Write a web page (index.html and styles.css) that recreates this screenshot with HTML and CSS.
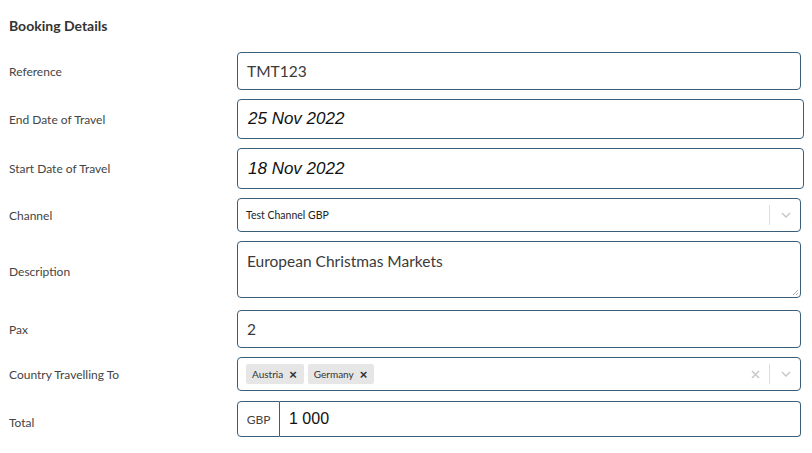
FILE: index.html
```html
<!DOCTYPE html>
<html>
<head>
<meta charset="utf-8">
<link rel="stylesheet" href="styles.css">
</head>
<body>
<div class="form">
  <h2 class="title">Booking Details</h2>
  <div class="row">
    <div class="label">Reference</div>
    <div class="control input h38">TMT123</div>
  </div>
  <div class="row">
    <div class="label">End Date of Travel</div>
    <div class="control input date h40">25 Nov 2022</div>
  </div>
  <div class="row">
    <div class="label">Start Date of Travel</div>
    <div class="control input date h41">18 Nov 2022</div>
  </div>
  <div class="row">
    <div class="label">Channel</div>
    <div class="control select h34">
      <div class="sel-value">Test Channel GBP</div>
      <div class="sel-ind">
        <span class="sep"></span>
        <svg class="chev" width="12" height="8" viewBox="0 0 12 8"><path d="M2 2 L6 6 L10 2" fill="none" stroke="#c4c4c4" stroke-width="1.3"/></svg>
      </div>
    </div>
  </div>
  <div class="row row-desc">
    <div class="label label-desc">Description</div>
    <div class="control textarea">European Christmas Markets
      <svg class="grip" width="7" height="7" viewBox="0 0 7 7"><path d="M6 1 L1 6 M6 4 L4 6" stroke="#999" stroke-width="0.8"/></svg>
    </div>
  </div>
  <div class="row">
    <div class="label">Pax</div>
    <div class="control input h38">2</div>
  </div>
  <div class="row row-country">
    <div class="label">Country Travelling To</div>
    <div class="control select h34">
      <div class="tags">
        <span class="tag">Austria <span class="x">×</span></span>
        <span class="tag">Germany <span class="x">×</span></span>
      </div>
      <div class="sel-ind">
        <svg class="clear" width="11" height="11" viewBox="0 0 11 11"><path d="M2 2 L9 9 M9 2 L2 9" stroke="#c8c8c8" stroke-width="1.5"/></svg>
        <span class="sep"></span>
        <svg class="chev" width="12" height="8" viewBox="0 0 12 8"><path d="M2 2 L6 6 L10 2" fill="none" stroke="#c4c4c4" stroke-width="1.3"/></svg>
      </div>
    </div>
  </div>
  <div class="row">
    <div class="label label-low">Total</div>
    <div class="control group">
      <div class="addon">GBP</div>
      <div class="amount">1 000</div>
    </div>
  </div>
</div>
</body>
</html>
```
FILE: styles.css
```css
* { box-sizing: border-box; }
body {
  margin: 0;
  background: #fff;
  font-family: Lato, "Liberation Sans", sans-serif;
  color: #333;
}
.form {
  width: 812px;
  padding: 17px 11px 0 9px;
}
.title {
  margin: 0 0 18px 0;
  font-size: 14px;
  font-weight: 700;
  color: #333;
  line-height: 17px;
}
.row {
  display: flex;
  align-items: center;
  margin-bottom: 9px;
}
.row-desc { margin-bottom: 12px; }
.row-country { margin-bottom: 10px; }
.label {
  width: 228px;
  flex: none;
  font-size: 12px;
  color: #444;
}
.label-low { padding-top: 7px; }
.label-desc { padding-top: 3px; }
.control {
  flex: 1;
  border: 1px solid #3b5f79;
  border-radius: 4px;
  background: #fff;
}
.input {
  display: flex;
  align-items: center;
  padding: 0 9px;
  font-size: 15.5px;
  color: #3a3a3a;
}
.h38 { height: 38px; }
.h40 { height: 40px; margin-right: -3px; }
.h41 { height: 41px; margin-right: -3px; }
.h34 { height: 34px; }
.date {
  font-family: "Liberation Sans", Arial, sans-serif;
  font-style: italic;
  font-size: 17px;
  color: #111;
  padding-left: 10px;
}
.select {
  display: flex;
  align-items: center;
  padding-left: 7px;
}
.sel-value {
  flex: 1;
  font-size: 10.5px;
  color: #222;
  padding-left: 1px;
}
.sel-ind {
  display: flex;
  align-items: center;
  margin-left: auto;
  padding-right: 8px;
}
.sep {
  width: 1px;
  height: 20px;
  background: #ddd;
  margin: 0 10px 0 8px;
}
.clear { display: block; }
.chev { display: block; }
.textarea {
  position: relative;
  height: 57px;
  padding: 10px 9px;
  font-size: 15.5px;
  color: #3a3a3a;
  line-height: 18px;
}
.grip {
  position: absolute;
  right: 1px;
  bottom: 1px;
}
.tags {
  display: flex;
  gap: 4px;
  flex: 1;
  padding-left: 1px;
}
.tag {
  display: inline-flex;
  align-items: center;
  height: 20px;
  padding: 0 7px 0 6px;
  background: #e6e6e6;
  border-radius: 2px;
  font-size: 10px;
  color: #333;
}
.tag .x {
  margin-left: 6px;
  font-family: "Liberation Sans", sans-serif;
  font-size: 13px;
  font-weight: 700;
  color: #333;
}
.group {
  display: flex;
  height: 36px;
  border: none;
}
.addon {
  width: 43px;
  flex: none;
  display: flex;
  align-items: center;
  justify-content: center;
  border: 1px solid #3b5f79;
  border-radius: 4px 0 0 4px;
  font-size: 12px;
  color: #444;
}
.amount {
  flex: 1;
  display: flex;
  align-items: center;
  border: 1px solid #3b5f79;
  border-left: none;
  border-radius: 0 4px 4px 0;
  padding-left: 9px;
  font-family: "Liberation Sans", Arial, sans-serif;
  font-size: 16px;
  color: #111;
}
```
